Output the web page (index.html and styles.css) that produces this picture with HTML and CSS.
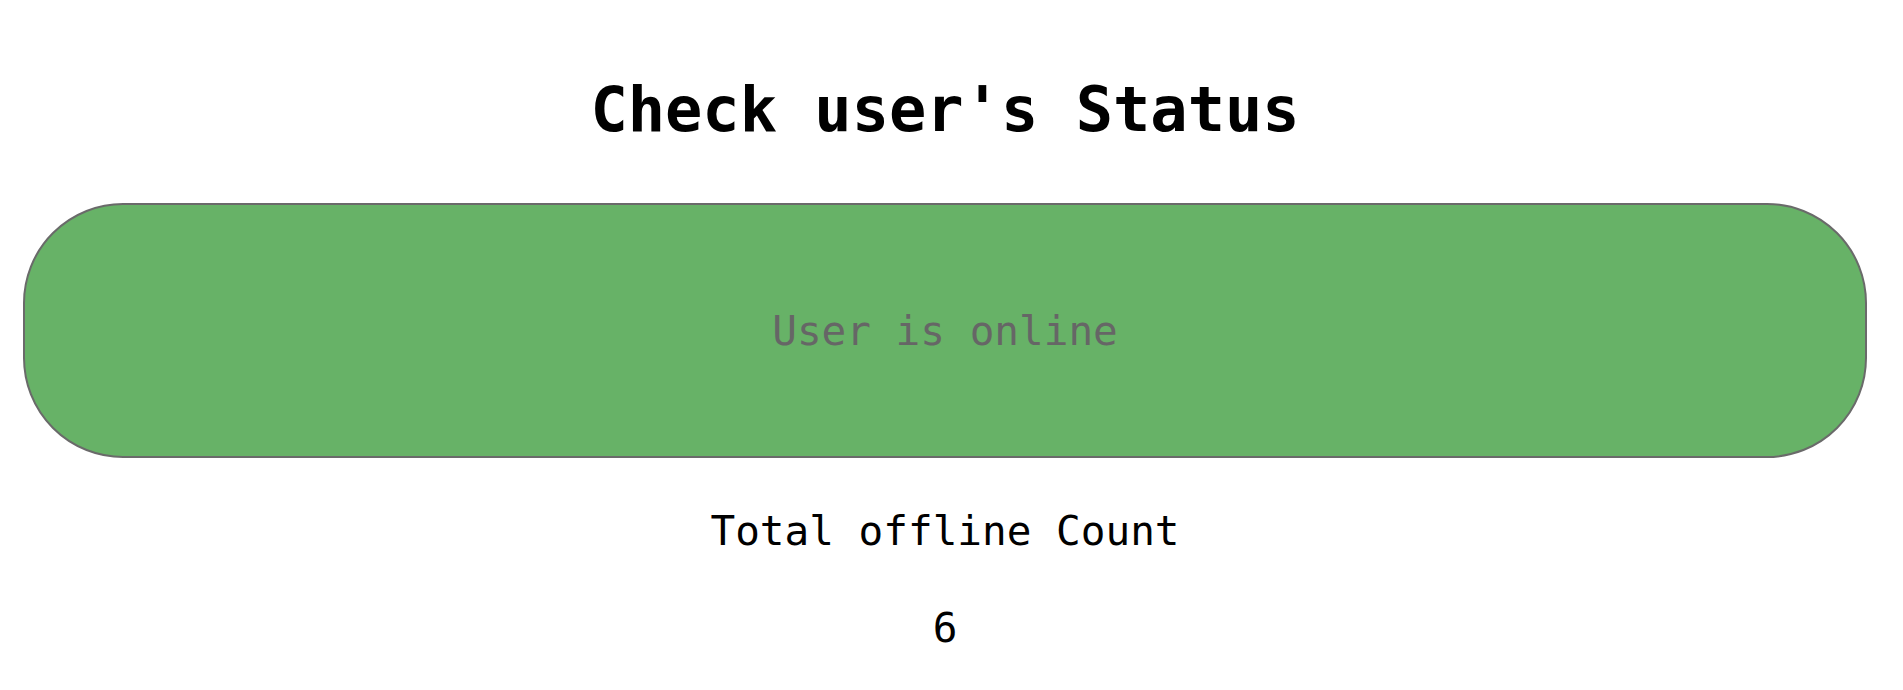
FILE: index.html
```html
<!DOCTYPE html>
<html lang="en">
<head>
<meta charset="utf-8">
<title>Check user's Status</title>
<link rel="stylesheet" href="styles.css">
</head>
<body>
<main class="status-page">
  <h1 class="status-title">Check user's Status</h1>
  <div class="status-card status-card--online">
    <span class="status-text">User is online</span>
  </div>
  <p class="offline-label">Total offline Count</p>
  <p class="offline-count">6</p>
</main>
</body>
</html>
```

FILE: styles.css
```css
html, body {
  margin: 0;
  padding: 0;
  background: #ffffff;
}

.status-page {
  width: 1844px;
  margin-left: 23px;
  padding-top: 74px;
  display: flex;
  flex-direction: column;
  align-items: stretch;
  font-family: "DejaVu Sans Mono", "Liberation Mono", monospace;
  color: #000000;
  text-align: center;
}

.status-title {
  margin: 0;
  font-size: 62px;
  line-height: 72px;
  font-weight: bold;
}

.status-card {
  box-sizing: border-box;
  margin-top: 57px;
  height: 255px;
  border: 2px solid #6a6a6a;
  border-radius: 100px;
  display: flex;
  align-items: center;
  justify-content: center;
}

.status-card--online {
  background: #67b267;
}

.status-text {
  font-size: 41px;
  line-height: 48px;
  color: #666666;
}

.offline-label,
.offline-count {
  margin: 0;
  font-size: 41px;
  line-height: 48px;
}

.offline-label {
  margin-top: 49px;
}

.offline-count {
  margin-top: 49px;
}
```
